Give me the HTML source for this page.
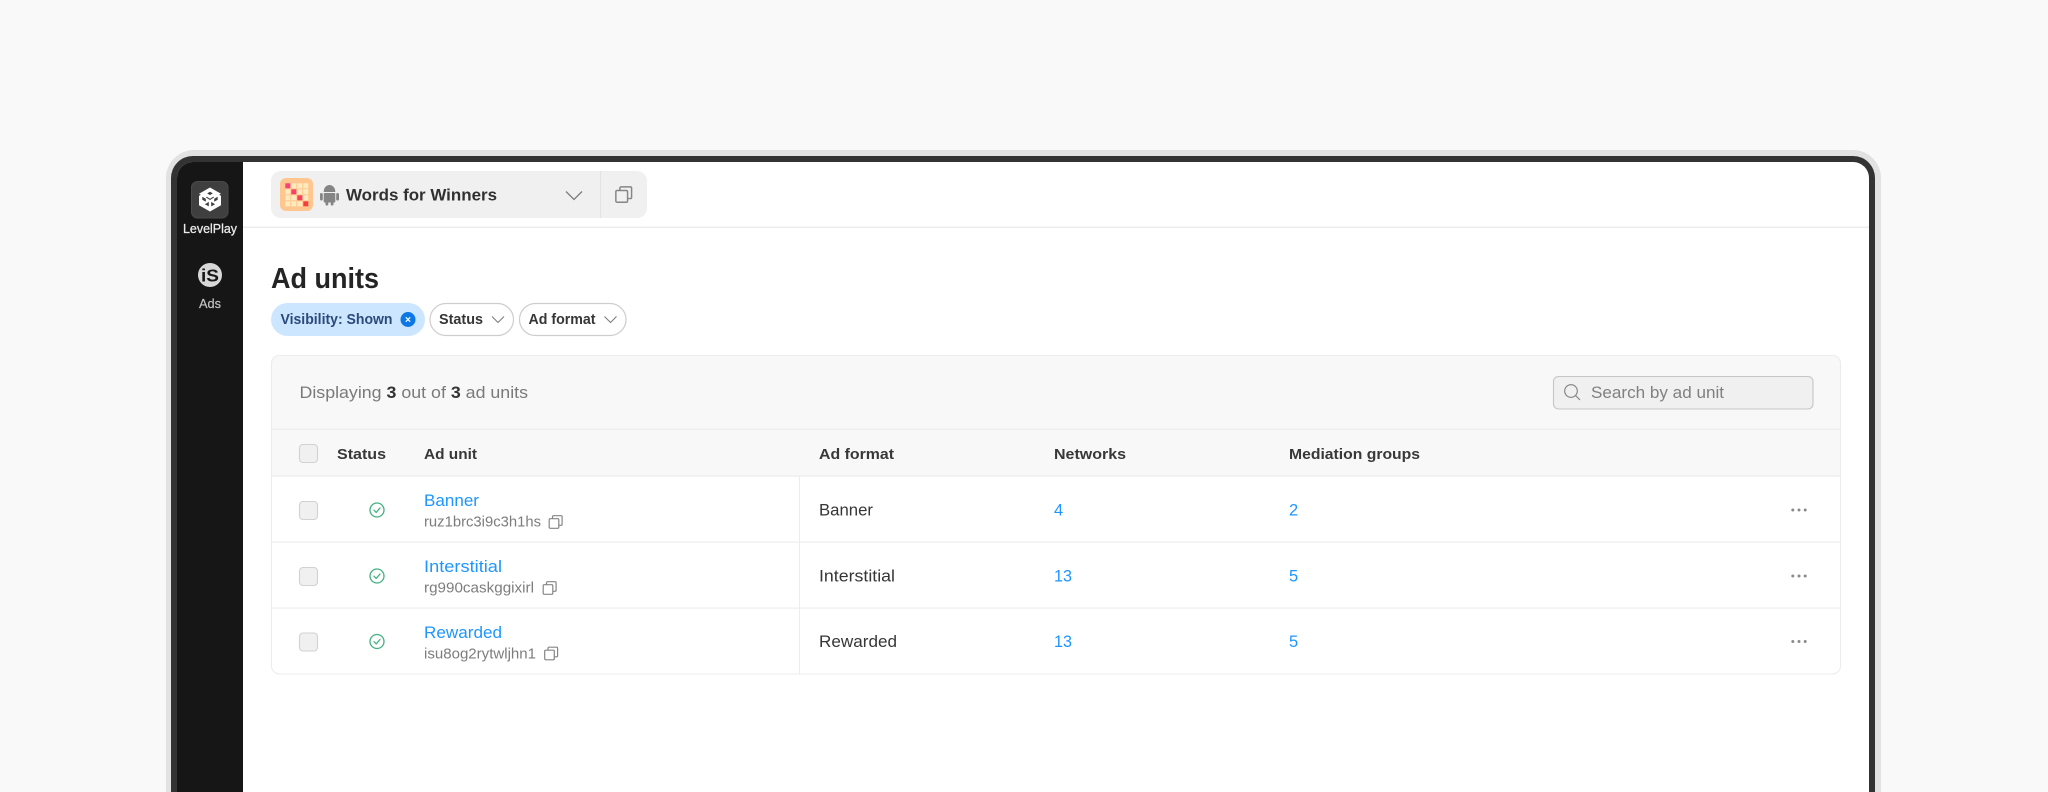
<!DOCTYPE html>
<html><head><meta charset="utf-8"><title>Ad units</title>
<style>
html,body{margin:0;padding:0;background:#f9f9f9;width:2048px;height:792px;overflow:hidden}
svg{display:block}
text{font-family:"Liberation Sans",sans-serif}
</style></head><body>
<svg width="2048" height="792" viewBox="0 0 2048 792" xmlns="http://www.w3.org/2000/svg">
<defs>
<g id="copy" fill="none" stroke="#858585" stroke-width="1.2"><rect x="0.7" y="3.7" width="9.6" height="9.6" rx="1"/><path d="M4 3.500V1.700a1 1 0 0 1 1-1h7.600a1 1 0 0 1 1 1v7.600a1 1 0 0 1-1 1H10.500"/></g>
<g id="ok" fill="none" stroke="#45B183" stroke-width="1.3"><circle cx="8" cy="8" r="7"/><path d="M5 8.200l2.200 2.200L11 6" stroke-linecap="round" stroke-linejoin="round"/></g>
<g id="cb"><rect x="0.5" y="0.5" width="18" height="18" rx="3.5" fill="#f0f0f0" stroke="#d2d2d2" stroke-width="1.1"/></g>
<g id="dots" fill="#8a8a8a"><circle cx="1.8" cy="1.5" r="1.5"/><circle cx="8" cy="1.5" r="1.5"/><circle cx="14.2" cy="1.5" r="1.5"/></g>
</defs>
<!-- device frame -->
<path d="M166 792V178a28 28 0 0 1 28-28H1853a28 28 0 0 1 28 28V792Z" fill="#e2e2e2"/>
<path d="M171 792V178a22 22 0 0 1 22-22H1853a22 22 0 0 1 22 22V792Z" fill="#333333"/>
<path d="M177 792V178a16 16 0 0 1 16-16H1853a16 16 0 0 1 16 16V792Z" fill="#ffffff"/>
<path d="M177 792V178a16 16 0 0 1 16-16H243V792Z" fill="#161616"/>
<rect x="243" y="226.500" width="1626" height="1.500" fill="#ececec"/>

<!-- sidebar -->
<rect x="191.500" y="181.500" width="36.500" height="36.500" rx="6" fill="#3f3f3f" stroke="#4a4a4a"/>
<g transform="translate(198.500,187.500)">
<path d="M11.500 0L22.500 6.200V17.800L11.500 24L0.500 17.800V6.200Z" fill="#fff"/>
<g fill="#3f3f3f">
<path d="M11.500 4.200L14.300 5.900L11.500 7.600L8.700 5.900Z"/>
<path d="M8.300 9.300L11.500 11.200L14.700 9.300L15.700 9.900L11.500 12.500L7.300 9.900Z"/>
<path d="M3.800 9.200L7.300 11.300V14.200L3.800 12.200Z"/>
<path d="M19.200 9.200L15.700 11.300V14.200L19.200 12.200Z"/>
<path d="M6.400 16.700L10.300 14.400V18.900Z"/>
<path d="M16.600 16.700L12.700 14.400V18.900Z"/>
<path d="M0.500 6.200L2.400 7.300L0.500 8.400ZM22.500 6.200L20.600 7.300L22.500 8.400Z"/>
</g>
</g>
<text x="183" y="233" font-size="12.500" fill="#ececec" stroke="#ececec" stroke-width="0.25" textLength="54" lengthAdjust="spacingAndGlyphs">LevelPlay</text>
<circle cx="210" cy="275" r="12" fill="#d8d8d8"/>
<text x="201" y="281.500" font-size="17.500" font-weight="700" fill="#161616" textLength="18" lengthAdjust="spacingAndGlyphs">iS</text>
<text x="199" y="308" font-size="12.500" fill="#c2c2c2" stroke="#c2c2c2" stroke-width="0.2" textLength="22" lengthAdjust="spacingAndGlyphs">Ads</text>

<!-- app selector -->
<rect x="271" y="171" width="376" height="47" rx="10" fill="#f0f0f0"/>
<rect x="600" y="171" width="1" height="47" fill="#e3e3e3"/>
<rect x="280" y="178" width="33" height="33" rx="6" fill="#FFC78F"/>
<g fill="#FFE9BF">
<rect x="285.300" y="183.300" width="5" height="5" fill="#F9407A"/><rect x="291.300" y="183.300" width="5" height="5"/><rect x="297.300" y="183.300" width="5" height="5"/><rect x="303.300" y="183.300" width="5" height="5"/>
<rect x="285.300" y="189.300" width="5" height="5"/><rect x="291.300" y="189.300" width="5" height="5" fill="#F9406B"/><rect x="297.300" y="189.300" width="5" height="5"/><rect x="303.300" y="189.300" width="5" height="5"/>
<rect x="285.300" y="195.300" width="5" height="5"/><rect x="291.300" y="195.300" width="5" height="5"/><rect x="297.300" y="195.300" width="5" height="5" fill="#F6405A"/><rect x="303.300" y="195.300" width="5" height="5"/>
<rect x="285.300" y="201.300" width="5" height="5"/><rect x="291.300" y="201.300" width="5" height="5"/><rect x="297.300" y="201.300" width="5" height="5"/><rect x="303.300" y="201.300" width="5" height="5" fill="#F53D3D"/>
</g>
<g fill="#858585">
<path d="M323.700 192c0-4.500 2.800-7 5.800-7s5.800 2.500 5.800 7z"/>
<rect x="323.700" y="193" width="11.600" height="9.500" rx="1"/>
<rect x="320" y="193" width="2.800" height="7.500" rx="1.400"/>
<rect x="336.200" y="193" width="2.800" height="7.500" rx="1.400"/>
<rect x="325.500" y="200" width="2.800" height="5.500" rx="1.400"/>
<rect x="330.700" y="200" width="2.800" height="5.500" rx="1.400"/>
</g>
<text x="346" y="200.500" font-size="17" font-weight="700" fill="#303030" textLength="151" lengthAdjust="spacingAndGlyphs">Words for Winners</text>
<path d="M566 191.500l8 8 8-8" fill="none" stroke="#7d7d7d" stroke-width="1.300"/>
<g transform="translate(615,186) scale(1.220)"><use href="#copy"/></g>

<!-- title -->
<text x="271" y="288" font-size="29" font-weight="700" fill="#242424" textLength="108" lengthAdjust="spacingAndGlyphs">Ad units</text>

<!-- chips -->
<rect x="271" y="303" width="154" height="33" rx="16.500" fill="#CDE6FF"/>
<text x="280.500" y="324" font-size="14.500" font-weight="700" fill="#2A4A7C" textLength="112" lengthAdjust="spacingAndGlyphs">Visibility: Shown</text>
<circle cx="408" cy="319.500" r="7.500" fill="#0C78E6"/>
<path d="M405.800 317.300l4.400 4.400M410.200 317.300l-4.400 4.400" stroke="#fff" stroke-width="1.200"/>
<rect x="430" y="303.500" width="83.500" height="32" rx="16" fill="#fff" stroke="#cdcdcd" stroke-width="1.200"/>
<text x="439" y="324" font-size="14.500" font-weight="700" fill="#363636" textLength="44" lengthAdjust="spacingAndGlyphs">Status</text>
<path d="M492 316.500l6 6 6-6" fill="none" stroke="#7d7d7d" stroke-width="1.100"/>
<rect x="519.500" y="303.500" width="106.500" height="32" rx="16" fill="#fff" stroke="#cdcdcd" stroke-width="1.200"/>
<text x="528.500" y="324" font-size="14.500" font-weight="700" fill="#363636" textLength="67" lengthAdjust="spacingAndGlyphs">Ad format</text>
<path d="M604.500 316.500l6 6 6-6" fill="none" stroke="#7d7d7d" stroke-width="1.100"/>

<!-- table -->
<path d="M271 476V363a8 8 0 0 1 8-8H1833a8 8 0 0 1 8 8V476Z" fill="#f8f8f8"/>
<rect x="271.500" y="355.500" width="1569" height="318.500" rx="8" fill="none" stroke="#ececec" stroke-width="1.100"/>
<rect x="271" y="428.500" width="1570" height="1.200" fill="#ebebeb"/>
<rect x="271" y="475.500" width="1570" height="1.200" fill="#ebebeb"/>
<rect x="271" y="541.500" width="1570" height="1.200" fill="#eeeeee"/>
<rect x="271" y="607.500" width="1570" height="1.200" fill="#eeeeee"/>
<rect x="799" y="477" width="1" height="197" fill="#ececec"/>

<text x="299.500" y="398" font-size="16.500" fill="#7a7a7a" textLength="228.500" lengthAdjust="spacingAndGlyphs">Displaying <tspan fill="#333" font-weight="700">3</tspan> out of <tspan fill="#333" font-weight="700">3</tspan> ad units</text>

<rect x="1553.500" y="376.500" width="259.500" height="32.500" rx="5" fill="#f0f0f0" stroke="#c6c6c6" stroke-width="1.100"/>
<circle cx="1571" cy="391" r="6.300" fill="none" stroke="#808080" stroke-width="1.100"/>
<path d="M1575.500 395.500l4.500 4.500" stroke="#808080" stroke-width="1.100"/>
<text x="1591" y="398" font-size="16.500" fill="#808080" textLength="133" lengthAdjust="spacingAndGlyphs">Search by ad unit</text>

<!-- header -->
<use href="#cb" x="299" y="444"/>
<g font-size="15" font-weight="700" fill="#383838">
<text x="337" y="459" textLength="49" lengthAdjust="spacingAndGlyphs">Status</text>
<text x="424" y="459" textLength="53" lengthAdjust="spacingAndGlyphs">Ad unit</text>
<text x="819" y="459" textLength="75" lengthAdjust="spacingAndGlyphs">Ad format</text>
<text x="1054" y="459" textLength="72" lengthAdjust="spacingAndGlyphs">Networks</text>
<text x="1289" y="459" textLength="131" lengthAdjust="spacingAndGlyphs">Mediation groups</text>
</g>

<!-- row 1 -->
<use href="#cb" x="299" y="501"/>
<use href="#ok" x="369" y="502"/>
<text x="424" y="506" font-size="16.500" fill="#1E96FF" textLength="55" lengthAdjust="spacingAndGlyphs">Banner</text>
<text x="424" y="526.500" font-size="14.500" fill="#7d7d7d" textLength="117" lengthAdjust="spacingAndGlyphs">ruz1brc3i9c3h1hs</text>
<use href="#copy" x="548.500" y="515"/>
<text x="819" y="515.500" font-size="16.500" fill="#363636" textLength="54" lengthAdjust="spacingAndGlyphs">Banner</text>
<text x="1054" y="515.500" font-size="16.500" fill="#1E96FF">4</text>
<text x="1289" y="515.500" font-size="16.500" fill="#1E96FF">2</text>
<use href="#dots" x="1791" y="508.500"/>

<!-- row 2 -->
<use href="#cb" x="299" y="567"/>
<use href="#ok" x="369" y="568"/>
<text x="424" y="572" font-size="16.500" fill="#1E96FF" textLength="78" lengthAdjust="spacingAndGlyphs">Interstitial</text>
<text x="424" y="592.500" font-size="14.500" fill="#7d7d7d" textLength="110" lengthAdjust="spacingAndGlyphs">rg990caskggixirl</text>
<use href="#copy" x="542.500" y="581"/>
<text x="819" y="581.500" font-size="16.500" fill="#363636" textLength="76" lengthAdjust="spacingAndGlyphs">Interstitial</text>
<text x="1054" y="581.500" font-size="16.500" fill="#1E96FF" textLength="18" lengthAdjust="spacingAndGlyphs">13</text>
<text x="1289" y="581.500" font-size="16.500" fill="#1E96FF">5</text>
<use href="#dots" x="1791" y="574.500"/>

<!-- row 3 -->
<use href="#cb" x="299" y="632.500"/>
<use href="#ok" x="369" y="633.500"/>
<text x="424" y="638" font-size="16.500" fill="#1E96FF" textLength="78" lengthAdjust="spacingAndGlyphs">Rewarded</text>
<text x="424" y="658.500" font-size="14.500" fill="#7d7d7d" textLength="112" lengthAdjust="spacingAndGlyphs">isu8og2rytwljhn1</text>
<use href="#copy" x="544" y="646.500"/>
<text x="819" y="647" font-size="16.500" fill="#363636" textLength="78" lengthAdjust="spacingAndGlyphs">Rewarded</text>
<text x="1054" y="647" font-size="16.500" fill="#1E96FF" textLength="18" lengthAdjust="spacingAndGlyphs">13</text>
<text x="1289" y="647" font-size="16.500" fill="#1E96FF">5</text>
<use href="#dots" x="1791" y="640"/>
</svg>
</body></html>
